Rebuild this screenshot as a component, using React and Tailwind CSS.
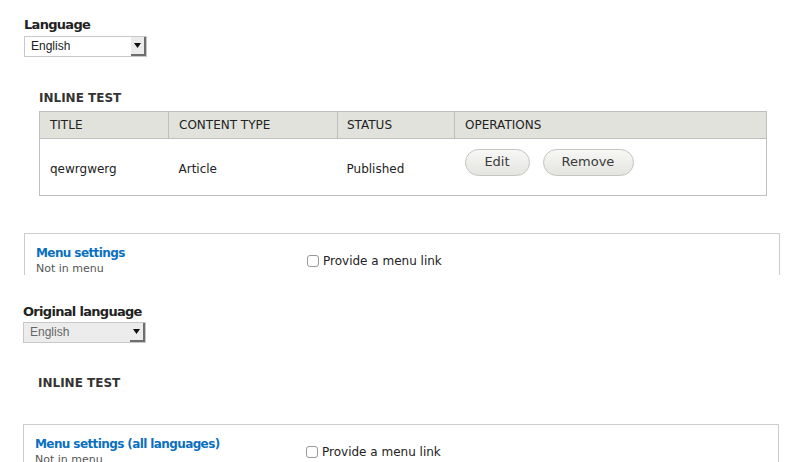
import React from "react";

const font = { fontFamily: '"DejaVu Sans", sans-serif' };

const Select = ({ disabled }) => (
  <div
    className={`flex h-[21px] w-[123px] items-stretch border border-[#c8c8c8] ${
      disabled ? "bg-[#ececec] text-[#666]" : "bg-white text-[#222]"
    }`}
  >
    <span
      className="flex-1 pl-[6px] text-[12px] leading-[19px]"
      style={{ fontFamily: '"Liberation Sans", Arial, sans-serif' }}
    >
      English
    </span>
    <span className="flex w-[15px] items-center justify-center border-r-2 border-b-2 border-[#6e6e6e] bg-[#ececec]">
      <svg width="7" height="5" viewBox="0 0 7 5">
        <path d="M0 0h7L3.5 5z" fill="#111" />
      </svg>
    </span>
  </div>
);

const PillButton = ({ children, w }) => (
  <button
    className={`${w} h-[27px] rounded-full border border-[#c4c4c0] bg-gradient-to-b from-[#f7f7f5] to-[#e4e4e0] text-[13px] text-[#3a3a3a]`}
  >
    {children}
  </button>
);

const MenuBox = ({ title, className }) => (
  <div className={`flex border-x border-t border-[#cccccc] ${className}`}>
    <div className="w-[282px] pl-[11px] pt-[11px]">
      <div className="text-[12px] font-bold leading-[16px] tracking-[-0.6px] text-[#0b6fc0]">
        {title}
      </div>
      <div className="text-[11px] leading-[16px] text-[#555]">Not in menu</div>
    </div>
    <label className="flex items-center gap-[4px] pt-[18px] self-start text-[12px] text-[#222]">
      <span className="h-[12px] w-[12px] rounded-[3px] border border-[#999] bg-white" />
      Provide a menu link
    </label>
  </div>
);

export default function App() {
  return (
    <div className="h-[462px] w-[803px] overflow-hidden bg-white" style={font}>
      <div className="pl-[24px] pt-[16px]">
        <div className="text-[13px] font-bold leading-[18px] tracking-[-0.7px] text-[#222]">
          Language
        </div>
        <div className="mt-[2px]">
          <Select />
        </div>
      </div>

      <div className="pl-[39px] pt-[33px]">
        <div className="text-[12px] font-bold leading-[16px] text-[#333]">
          INLINE TEST
        </div>
        <table className="mt-[5px] w-[728px] border-collapse border border-[#bfbfbf] text-[12px] text-[#222]">
          <thead>
            <tr className="h-[27px] bg-[#e1e2dc] text-left">
              <th className="w-[129px] border border-[#bfbfbf] pl-[10px] font-normal">TITLE</th>
              <th className="w-[169px] border border-[#bfbfbf] pl-[10px] font-normal">CONTENT TYPE</th>
              <th className="w-[117px] border border-[#bfbfbf] pl-[9px] font-normal">STATUS</th>
              <th className="border border-[#bfbfbf] pl-[10px] font-normal">OPERATIONS</th>
            </tr>
          </thead>
          <tbody>
            <tr className="h-[57px]">
              <td className="pl-[10px] pt-[3px]">qewrgwerg</td>
              <td className="pl-[10px] pt-[3px]">Article</td>
              <td className="pl-[9px] pt-[3px]">Published</td>
              <td className="pl-[10px] pb-[10px]">
                <div className="flex gap-[13px]">
                  <PillButton w="w-[65px]">Edit</PillButton>
                  <PillButton w="w-[91px]">Remove</PillButton>
                </div>
              </td>
            </tr>
          </tbody>
        </table>
      </div>

      <MenuBox
        title="Menu settings"
        className="ml-[24px] mt-[37px] h-[42px] w-[756px]"
      />

      <div className="pl-[23px] pt-[28px]">
        <div className="text-[13px] font-bold leading-[18px] tracking-[-0.7px] text-[#222]">
          Original language
        </div>
        <div className="mt-[1px]">
          <Select disabled />
        </div>
      </div>

      <div className="pl-[38px] pt-[32px]">
        <div className="text-[12px] font-bold leading-[16px] text-[#333]">
          INLINE TEST
        </div>
      </div>

      <MenuBox
        title="Menu settings (all languages)"
        className="ml-[23px] mt-[33px] h-[42px] w-[756px]"
      />
    </div>
  );
}
